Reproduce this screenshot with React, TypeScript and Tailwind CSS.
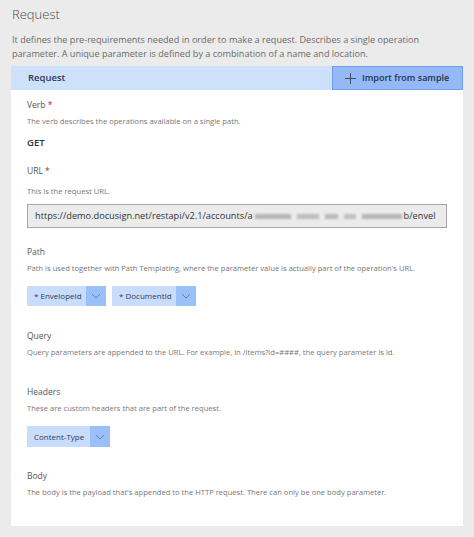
import React from "react";

const font = { fontFamily: '"Open Sans", "Noto Sans", sans-serif' };

const Chevron = () => (
  <svg width="10" height="6" viewBox="0 0 10 6" fill="none">
    <path d="M1 1l4 4 4-4" stroke="#5b7fc4" strokeWidth="1" />
  </svg>
);

const Chip = ({ label, width }: { label: string; width: string }) => (
  <div className={`flex h-full ${width}`}>
    <div className="flex flex-1 items-center bg-[#c8ddfc] pl-[7px] text-[8px] text-[#2f3b52]">
      {label}
    </div>
    <div className="flex w-[20px] items-center justify-center bg-[#9bbff9]">
      <Chevron />
    </div>
  </div>
);

const Field = ({ label, required, desc, className = "" }: { label: string; required?: boolean; desc: string; className?: string }) => (
  <div className={className}>
    <p className="text-[8.5px] leading-[14px] text-[#555]">
      {label}
      {required && <span className="text-[#a4262c]"> *</span>}
    </p>
    <p className="mt-[2px] text-[7.6px] leading-[14px] text-[#777]">{desc}</p>
  </div>
);

export default function App() {
  return (
    <div className="min-h-[537px] w-[474px] bg-[#ebebeb] px-[11px]" style={font}>
      <h1 className="pl-px pt-[5px] text-[13px] font-light leading-[18px] text-[#4a4a4a]">Request</h1>
      <p className="mt-[10px] pl-px text-[9.1px] leading-[14px] text-[#6a6a6a]">
        It defines the pre-requirements needed in order to make a request. Describes a single operation
        <br />
        parameter. A unique parameter is defined by a combination of a name and location.
      </p>

      <div className="mt-[5px] flex h-[24px] items-center bg-[#cde0fc]">
        <span className="flex-1 pl-[17px] text-[9.5px] font-semibold text-[#2f3b52]">Request</span>
        <button className="flex h-full w-[131px] items-center gap-[6px] border border-[#6f9ef0] bg-[#95b8f6] pl-[12px] text-[9px] font-semibold text-[#26344f]">
          <svg width="11" height="11" viewBox="0 0 11 11">
            <path d="M5.5 0v11M0 5.5h11" stroke="#3b4252" strokeWidth="0.9" />
          </svg>
          Import from sample
        </button>
      </div>

      <div className="bg-white px-[16px] pb-[27px] pt-[8px]">
        <Field label="Verb" required desc="The verb describes the operations available on a single path." />
        <p className="mt-[8px] text-[9.5px] font-semibold leading-[14px] text-[#333]">GET</p>

        <div className="mt-[14px]">
          <p className="text-[8.5px] leading-[14px] text-[#555]">
            URL<span className="text-[#a4262c]"> *</span>
          </p>
          <p className="mt-[6px] text-[7.6px] leading-[14px] text-[#777]">This is the request URL.</p>
        </div>

        <div className="mt-[6px] flex h-[24px] items-center overflow-hidden whitespace-nowrap border border-[#a6a6a6] bg-[#ebebeb] pl-[7px] text-[9.2px] text-[#333]">
          <span className="shrink-0">https://demo.docusign.net/restapi/v2.1/accounts/a</span>
          <div className="flex w-[151px] shrink-0 items-center gap-[6px] px-[2px] blur-[1.2px]">
            <div className="h-[5px] w-[38px] bg-[#b5b5b5]" />
            <div className="h-[5px] w-[22px] bg-[#bdbdbd]" />
            <div className="h-[5px] w-[14px] bg-[#b8b8b8]" />
            <div className="h-[5px] w-[12px] bg-[#c0c0c0]" />
            <div className="h-[5px] w-[41px] bg-[#b5b5b5]" />
          </div>
          <span className="shrink-0">b/envel</span>
        </div>

        <Field
          className="mt-[17px]"
          label="Path"
          desc="Path is used together with Path Templating, where the parameter value is actually part of the operation's URL."
        />
        <div className="mt-[11px] flex h-[20px] gap-[6px]">
          <Chip label="* EnvelopeId" width="w-[79px]" />
          <Chip label="* DocumentId" width="w-[84px]" />
        </div>

        <Field
          className="mt-[23px]"
          label="Query"
          desc="Query parameters are appended to the URL. For example, in /items?id=####, the query parameter is id."
        />

        <Field className="mt-[26px]" label="Headers" desc="These are custom headers that are part of the request." />
        <div className="mt-[11px] flex h-[21px]">
          <Chip label="Content-Type" width="w-[83px]" />
        </div>

        <Field
          className="mt-[22px]"
          label="Body"
          desc="The body is the payload that's appended to the HTTP request. There can only be one body parameter."
        />
      </div>
    </div>
  );
}
